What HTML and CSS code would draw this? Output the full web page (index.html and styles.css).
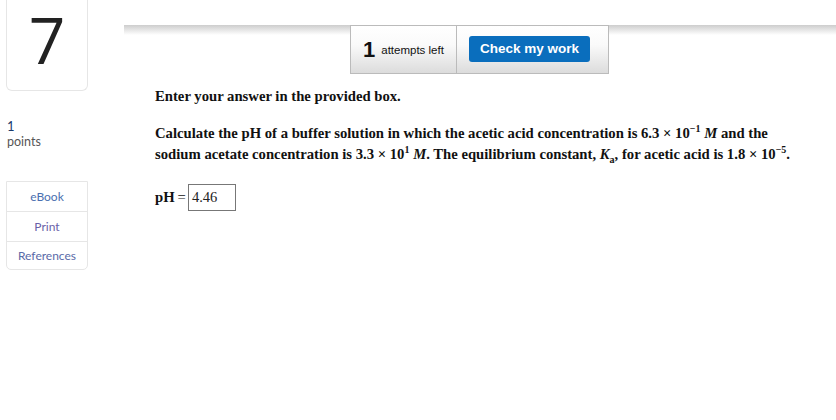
FILE: index.html
```html
<!DOCTYPE html>
<html>
<head>
<meta charset="utf-8">
<link rel="stylesheet" href="styles.css">
</head>
<body>
<div class="page">
  <aside class="side">
    <div class="qnum">7</div>
    <div class="points"><span class="pval">1</span><span class="plabel">points</span></div>
    <div class="links">
      <div class="link">eBook</div>
      <div class="link">Print</div>
      <div class="link">References</div>
    </div>
  </aside>
  <main class="main">
    <div class="topbar">
      <div class="controls">
        <div class="attempts"><span class="anum">1</span><span class="atext">attempts left</span></div>
        <div class="checkcell"><button class="check">Check my work</button></div>
      </div>
    </div>
    <div class="question">
      <p class="instr">Enter your answer in the provided box.</p>
      <p class="prompt">Calculate the pH of a buffer solution in which the acetic acid concentration is 6.3 × 10<sup>−1</sup> <i>M</i> and the sodium acetate concentration is 3.3 × 10<sup>1</sup> <i>M</i>. The equilibrium constant, <i>K</i><sub>a</sub>, for acetic acid is 1.8 × 10<sup>−5</sup>.</p>
      <div class="answer"><span class="ph">pH</span><span class="eq">=</span><span class="box">4.46</span></div>
    </div>
  </main>
</div>
</body>
</html>
```
FILE: styles.css
```css
html, body { margin: 0; padding: 0; background: #fff; }
body { width: 836px; height: 420px; overflow: hidden; font-family: "Lato", "Open Sans", sans-serif; }
.page { display: flex; }
.side { width: 82px; margin-left: 6px; flex: none; display: flex; flex-direction: column; }
.qnum {
  height: 91px; box-sizing: border-box;
  border: 1px solid #e6e6e6; border-top: none; border-radius: 0 0 6px 6px;
  display: flex; align-items: center; justify-content: center; padding-bottom: 10px;
  font-family: "Open Sans", sans-serif; font-size: 64px; font-weight: 400; color: #222; line-height: 64px;
}
.points { margin-top: 28px; padding-left: 1px; display: flex; flex-direction: column; font-size: 12.5px; line-height: 15px; color: #555; }
.pval { color: #1a3a6a; font-size: 13px; }
.links { margin-top: 32px; border: 1px solid #e6e6e6; border-radius: 0 0 5px 5px; display: flex; flex-direction: column; }
.link { height: 29px; display: flex; align-items: center; justify-content: center; font-size: 12px; color: #4a6fb0; border-top: 1px solid #e6e6e6; }
.link:first-child { border-top: none; height: 29px; }
.link:nth-child(2) { color: #6a5fa8; }
.link:nth-child(3) { color: #5a6aa8; height: 27px; }
.main { flex: 1; margin-left: 36px; }
.topbar {
  margin-top: 25px; height: 10px;
  background: linear-gradient(#cdcdcd, #ffffff);
  position: relative;
}
.controls { position: absolute; left: 226px; top: 0; display: flex; }
.attempts, .checkcell {
  height: 49px; box-sizing: border-box;
  border: 1px solid #bbb;
  background: linear-gradient(#ffffff 0%, #fafafa 40%, #dcdcdc 100%);
  display: flex; align-items: center;
}
.attempts { width: 107px; padding-left: 12px; font-family: "Liberation Sans", Arial, sans-serif; color: #111; }
.anum { font-size: 22px; font-weight: bold; margin-right: 6px; }
.atext { font-size: 11.5px; }
.checkcell { width: 152px; border-left: none; padding-left: 12px; }
.check {
  width: 121px; height: 26px; border: none; border-radius: 3px;
  background: #0a6ebd; color: #fff; font-family: "Liberation Sans", Arial, sans-serif;
  font-size: 13.5px; font-weight: bold; padding: 0; margin-top: -2px;
}
.question { padding-left: 31px; padding-top: 52px; font-family: "Liberation Serif", "Times New Roman", serif; font-weight: bold; font-size: 14.7px; color: #111; }
.question p { margin: 0; }
.instr { line-height: 18px; }
.prompt { margin-top: 18px !important; line-height: 21px; width: 640px; }
sup, sub { font-size: 10px; line-height: 0; }
sup { vertical-align: 6px; }
sub { vertical-align: -4px; }
.answer { margin-top: 19px; display: flex; align-items: center; }
.eq { font-weight: normal; margin: 0 2px 0 3px; }
.box { width: 48px; height: 27px; box-sizing: border-box; border: 1px solid #777; font-weight: normal; font-size: 14.5px; color: #222; padding: 4px 0 0 3px; }
```
